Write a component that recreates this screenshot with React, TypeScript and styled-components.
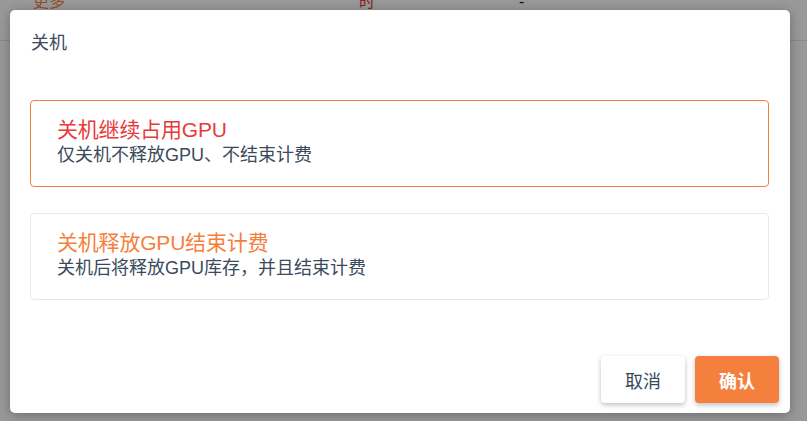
import styled, { createGlobalStyle } from "styled-components";

const GlobalStyle = createGlobalStyle`
  html, body {
    margin: 0;
    padding: 0;
    background: #ffffff;
    font-family: "Liberation Sans", "Noto Sans CJK SC", sans-serif;
    overflow: hidden;
  }
`;

const Page = styled.div`
  width: 807px;
  height: 421px;
  position: relative;
  overflow: hidden;
`;

const TableRow = styled.div`
  display: flex;
  align-items: flex-start;
  height: 48px;
  margin-top: -8px;
  border-bottom: 1px solid #e6e6e6;
  font-size: 16px;
  line-height: 20px;
`;

const Cell = styled.span<{ $left: number; $color: string }>`
  margin-left: ${(p) => p.$left}px;
  color: ${(p) => p.$color};
`;

const Overlay = styled.div`
  position: absolute;
  inset: 0;
  background: rgba(0, 0, 0, 0.4);
  display: flex;
  align-items: flex-start;
  padding: 10px 17px 0 10px;
`;

const Dialog = styled.div`
  width: 780px;
  height: 403px;
  background: #ffffff;
  border-radius: 5px;
  box-shadow: 0 2px 12px rgba(0, 0, 0, 0.3);
  display: flex;
  flex-direction: column;
  box-sizing: border-box;
`;

const Header = styled.div`
  padding: 21px 21px 0;
  font-size: 18px;
  line-height: 24px;
  color: #3a4a5c;
`;

const Body = styled.div`
  display: flex;
  flex-direction: column;
  gap: 26px;
  padding: 0 21px 0 20px;
  margin-top: 45px;
`;

const Option = styled.div<{ $active?: boolean }>`
  border: 1px solid ${(p) => (p.$active ? "#f5803e" : "#e6e8ee")};
  border-radius: 4px;
  padding: 15px 26px 19px;
  cursor: pointer;
`;

const OptionTitle = styled.div<{ $color: string }>`
  font-size: 21px;
  line-height: 27px;
  letter-spacing: -0.2px;
  color: ${(p) => p.$color};
`;

const OptionDesc = styled.div`
  font-size: 18px;
  line-height: 24px;
  color: #3a4a5c;
`;

const Footer = styled.div`
  margin-top: auto;
  display: flex;
  justify-content: flex-end;
  gap: 10px;
  padding: 0 11px 10px 0;
`;

const Button = styled.button<{ $primary?: boolean }>`
  width: 84px;
  height: 47px;
  border: none;
  border-radius: 4px;
  font-family: inherit;
  font-size: 18px;
  cursor: pointer;
  background: ${(p) => (p.$primary ? "#f5803e" : "#ffffff")};
  color: ${(p) => (p.$primary ? "#ffffff" : "#3a4a5c")};
  font-weight: ${(p) => (p.$primary ? "bold" : "normal")};
  box-shadow: 0 2px 5px rgba(0, 0, 0, 0.25);
`;

export default function App() {
  return (
    <Page>
      <GlobalStyle />
      <TableRow>
        <Cell $left={33} $color="#f5803e">更多</Cell>
        <Cell $left={294} $color="#e8393a">时</Cell>
        <Cell $left={144} $color="#222">-</Cell>
        <Cell $left={196} $color="#222">'</Cell>
      </TableRow>
      <Overlay>
        <Dialog>
          <Header>关机</Header>
          <Body>
            <Option $active>
              <OptionTitle $color="#e8393a">关机继续占用GPU</OptionTitle>
              <OptionDesc>仅关机不释放GPU、不结束计费</OptionDesc>
            </Option>
            <Option>
              <OptionTitle $color="#f5803e">关机释放GPU结束计费</OptionTitle>
              <OptionDesc>关机后将释放GPU库存，并且结束计费</OptionDesc>
            </Option>
          </Body>
          <Footer>
            <Button>取消</Button>
            <Button $primary>确认</Button>
          </Footer>
        </Dialog>
      </Overlay>
    </Page>
  );
}
